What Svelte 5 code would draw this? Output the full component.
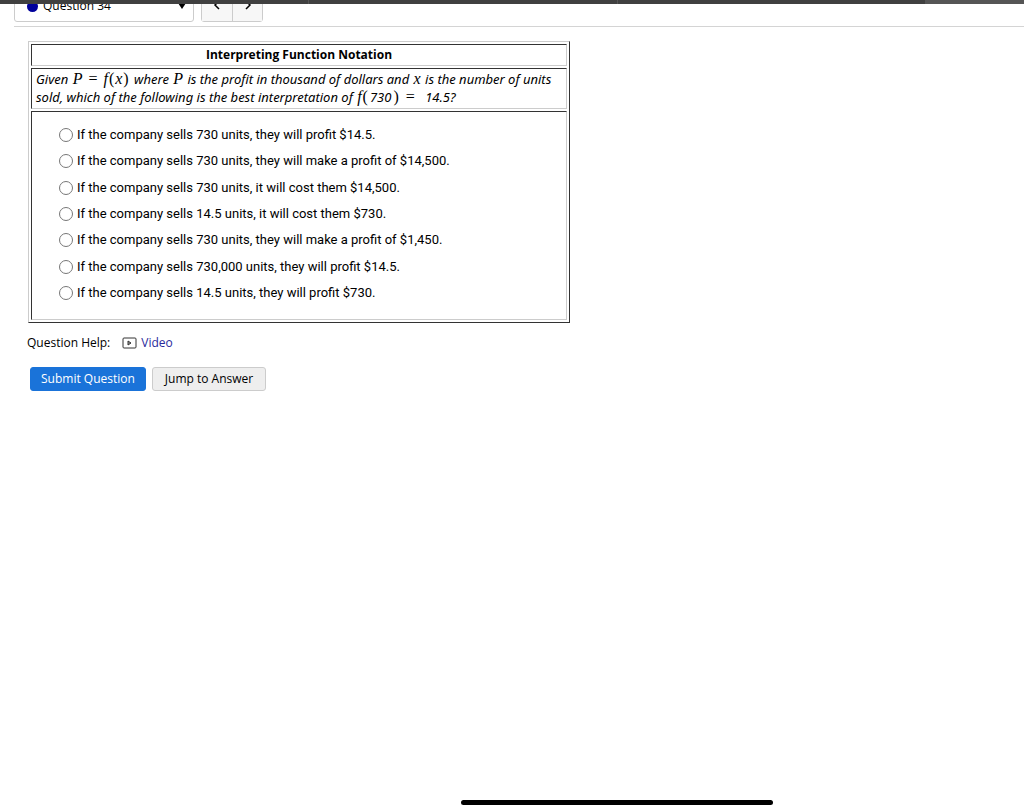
<script>
  const questions = Array.from({ length: 40 }, (_, i) => i + 1);
  let current = $state(34);
  let answer = $state('');

  const choices = [
    'If the company sells 730 units, they will profit $14.5.',
    'If the company sells 730 units, they will make a profit of $14,500.',
    'If the company sells 730 units, it will cost them $14,500.',
    'If the company sells 14.5 units, it will cost them $730.',
    'If the company sells 730 units, they will make a profit of $1,450.',
    'If the company sells 730,000 units, they will profit $14.5.',
    'If the company sells 14.5 units, they will profit $730.'
  ];
</script>

<div class="page">
  <div class="tabs"><span></span><span></span><span></span><span class="active"></span></div>

  <nav class="toolbar" aria-label="Question navigation">
    <div class="picker">
      <span class="dot"></span>
      <select bind:value={current} aria-label="Question">
        {#each questions as n}
          <option value={n}>Question {n}</option>
        {/each}
      </select>
      <svg class="caret" viewBox="0 0 8 6" aria-hidden="true"><path d="M0 0h8L4 6z" /></svg>
    </div>
    <div class="steps">
      <button type="button" aria-label="Previous question" onclick={() => (current = Math.max(1, current - 1))}>
        <svg viewBox="0 0 8 12" aria-hidden="true"><path d="M6 1 2 5l4 4" /></svg>
      </button>
      <button type="button" aria-label="Next question" onclick={() => (current = Math.min(40, current + 1))}>
        <svg viewBox="0 0 8 12" aria-hidden="true"><path d="M2 1l4 4-4 4" /></svg>
      </button>
    </div>
  </nav>

  <main>
    <table>
      <thead>
        <tr><th>Interpreting Function Notation</th></tr>
      </thead>
      <tbody>
        <tr>
          <td class="prompt">
            Given <span class="math">P<span class="eq">=</span>f<b>(</b>x<b>)</b></span> where <span class="math">P</span> is the
            profit in thousand of dollars and <span class="math">x</span> is the number of units sold, which of the
            following is the best interpretation of <span class="math">f<b>(</b></span>730<span class="math"><b>)</b><span class="eq">=</span></span>
            14.5?
          </td>
        </tr>
        <tr>
          <td class="answers">
            <ul>
              {#each choices as choice, i}
                <li>
                  <input type="radio" name="answer" id="choice-{i}" value={choice} bind:group={answer} />
                  <label for="choice-{i}">{choice}</label>
                </li>
              {/each}
            </ul>
          </td>
        </tr>
      </tbody>
    </table>

    <p class="help">
      Question Help:
      <a href="#video">
        <svg viewBox="0 0 15 12" aria-hidden="true">
          <rect x="1" y="1" width="13" height="10" rx="1" />
          <path d="M6 4v4l3-2z" />
        </svg>
        Video
      </a>
    </p>

    <div class="actions">
      <button type="button" class="primary">Submit Question</button>
      <button type="button">Jump to Answer</button>
    </div>
  </main>

  <div class="home-bar"></div>
</div>

<style>
  :global(body) {
    background: #fff;
  }

  .page {
    font: 12px/18px "Open Sans", "Noto Sans", sans-serif;
    color: #000;
    min-height: 100vh;
  }

  button,
  select {
    font: inherit;
    color: inherit;
    margin: 0;
  }

  .tabs {
    display: grid;
    grid-template-columns: 308fr 309fr 308fr 99fr;
    height: 4px;
    background: #404040;
  }

  .tabs span + span {
    border-left: 1px solid #555;
  }

  .tabs .active {
    background: #555;
  }

  .toolbar {
    display: flex;
    align-items: flex-end;
    gap: 7px;
    height: 18px;
    margin-left: 14px;
    padding-bottom: 4px;
    border-bottom: 1px solid #d4d4d4;
    overflow: hidden;
  }

  .picker,
  .steps {
    display: flex;
    align-items: center;
    box-sizing: border-box;
    flex: none;
    height: 32px;
    border: 1px solid #ccc;
    border-radius: 3px;
  }

  .picker {
    width: 180px;
    padding: 0 7px 0 12px;
    gap: 5px;
    background: #fff;
  }

  .dot {
    width: 11px;
    height: 11px;
    border-radius: 50%;
    background: #00009b;
  }

  select {
    flex: 1;
    appearance: none;
    border: 0;
    padding: 0;
    background: none;
  }

  .caret {
    width: 8px;
    height: 6px;
  }

  .steps button {
    display: grid;
    place-items: center;
    width: 30px;
    height: 100%;
    padding: 0;
    border: 0;
    background: #f7f7f7;
  }

  .steps button + button {
    border-left: 1px solid #ccc;
  }

  .steps svg {
    width: 8px;
    height: 12px;
    fill: none;
    stroke: #000;
    stroke-width: 1.5;
  }

  main {
    padding: 14px 27px 0;
  }

  table {
    width: 100%;
    max-width: 542px;
    margin-left: 1px;
    border: 1px solid;
    border-color: #ccc #333 #333 #ccc;
    border-spacing: 2px;
  }

  th,
  td {
    border: 1px solid;
    border-color: #333 #ccc #ccc #333;
    padding: 1px 4px;
  }

  .prompt {
    font-family: "Noto Sans", sans-serif;
    font-size: 13px;
    font-style: italic;
    padding-bottom: 2px;
  }

  .math {
    padding: 0 1px;
    font-family: "Liberation Serif", serif;
    font-size: 16px;
    line-height: 1;
    font-style: italic;
  }

  .math b {
    padding: 0 1px;
    font-style: normal;
    font-weight: 400;
  }

  .eq {
    padding: 0 6px;
    font-style: normal;
  }

  .answers {
    padding: 10px 22px 13px;
    font-family: Roboto, sans-serif;
    font-size: 13px;
  }

  ul {
    display: grid;
    grid-auto-rows: 1fr;
    min-height: 184px;
    list-style: none;
    margin: 0;
    padding: 0;
  }

  li {
    display: flex;
    align-items: center;
    gap: 4px;
    padding-left: 5px;
  }

  input {
    appearance: none;
    box-sizing: border-box;
    width: 14px;
    height: 14px;
    margin: 0;
    border: 1px solid #777;
    border-radius: 50%;
    background: #fff;
  }

  input:checked {
    background: #1a73d9;
    box-shadow: inset 0 0 0 3px #fff;
  }

  .help {
    display: flex;
    gap: 12px;
    margin: 11px 0 0;
  }

  a {
    display: flex;
    align-items: center;
    gap: 4px;
    color: #2a2a9c;
    text-decoration: none;
  }

  a svg {
    width: 15px;
    height: 12px;
    fill: none;
    stroke: #333;
  }

  a path {
    fill: #999;
  }

  .actions {
    display: flex;
    gap: 6px;
    margin: 15px 3px 0;
  }

  .actions button {
    height: 24px;
    padding: 0 12px;
    border: 1px solid #ccc;
    border-radius: 3px;
    background: #eee;
  }

  .actions .primary {
    padding: 0 10px;
    border-color: #1a73d9;
    background: #1a73d9;
    color: #fff;
  }

  .home-bar {
    position: fixed;
    bottom: 7px;
    left: 45%;
    width: 312px;
    height: 5px;
    border-radius: 3px;
    background: #000;
  }
</style>
